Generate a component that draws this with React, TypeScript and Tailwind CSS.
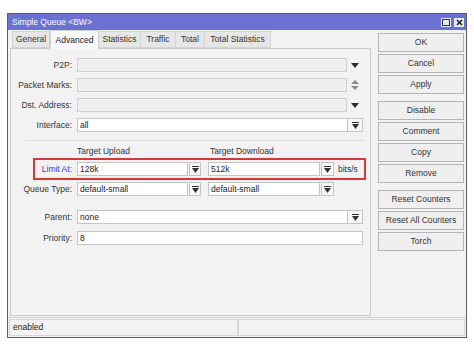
const tabs = [
  { label: 'General', w: 'w-[38px]' },
  { label: 'Advanced', w: 'w-[49px]', active: true },
  { label: 'Statistics', w: 'w-[42px]' },
  { label: 'Traffic', w: 'w-[35px]' },
  { label: 'Total', w: 'w-[29px]' },
  { label: 'Total Statistics', w: 'w-[66px]' },
];

const buttonGroups = [
  ['OK', 'Cancel', 'Apply'],
  ['Disable', 'Comment', 'Copy', 'Remove'],
  ['Reset Counters', 'Reset All Counters', 'Torch'],
];

function Arrow() {
  return (
    <svg width="8" height="5" viewBox="0 0 8 5">
      <path d="M0 0h8L4 5z" fill="#2a2a2a" />
    </svg>
  );
}

function UpDown() {
  return (
    <svg width="8" height="10" viewBox="0 0 8 10">
      <path d="M0 4h8L4 0z" fill="#8a8a8a" />
      <path d="M0 6h8L4 10z" fill="#8a8a8a" />
    </svg>
  );
}

function BarArrow() {
  return (
    <svg width="7" height="7" viewBox="0 0 7 7">
      <path d="M0 0.5h7" stroke="#333" strokeWidth="1" />
      <path d="M0 2h7L3.5 7z" fill="#333" />
    </svg>
  );
}

function DropBtn({ w }: { w: string }) {
  return (
    <div className={`${w} h-[14px] border border-[#c4c4c4] bg-[#f7f7f7] flex items-center justify-center`}>
      <BarArrow />
    </div>
  );
}

function Box({ value, w }: { value: string; w: string }) {
  return (
    <div className={`${w} h-[14px] border border-[#c4c4c4] bg-white pl-[2px] leading-[12px] text-[#222]`}>{value}</div>
  );
}

function Label({ text, w = 'w-[66px]', blue }: { text: string; w?: string; blue?: boolean }) {
  return (
    <div className={`${w} shrink-0 text-right pr-[5px] ${blue ? 'text-[#3b3bd6]' : 'text-[#333]'}`}>{text}</div>
  );
}

function DisabledRow({ label, icon }: { label: string; icon: 'down' | 'updown' }) {
  return (
    <div className="flex items-center h-[14px]">
      <Label text={label} />
      <div className="w-[270px] h-[14px] border border-[#cdcdcd] bg-[#efefef]" />
      <div className="w-[16px] flex justify-center">{icon === 'down' ? <Arrow /> : <UpDown />}</div>
    </div>
  );
}

function WideRow({ label, value, withBtn }: { label: string; value: string; withBtn?: boolean }) {
  return (
    <div className="flex items-center h-[14px]">
      <Label text={label} />
      <div className="w-[286px] h-[14px] border border-[#c4c4c4] bg-white flex">
        <div className="flex-1 pl-[2px] leading-[12px] text-[#222]">{value}</div>
        {withBtn && (
          <div className="w-[15px] border-l border-[#c4c4c4] bg-[#f7f7f7] flex items-center justify-center">
            <BarArrow />
          </div>
        )}
      </div>
    </div>
  );
}

function PairFields({ a, b }: { a: string; b: string }) {
  return (
    <>
      <Box value={a} w="w-[111px]" />
      <div className="ml-[1px]"><DropBtn w="w-[12px]" /></div>
      <div className="ml-[7px]"><Box value={b} w="w-[112px]" /></div>
      <div className="ml-[1px]"><DropBtn w="w-[13px]" /></div>
    </>
  );
}

export default function App() {
  return (
    <div className="w-[474px] h-[351px] bg-white pt-[13px] pl-[7px] font-['Liberation_Sans',Arial,sans-serif] text-[8.5px] text-[#333]">
      <div className="w-[460px] h-[325px] border border-[#5e5e5e] bg-[#f2f2f2] flex flex-col">
        {/* title bar */}
        <div className="h-[16px] bg-[#6b70d3] flex items-center justify-between pl-[4px] pr-[2px]">
          <span className="text-white text-[8.5px]">Simple Queue &lt;BW&gt;</span>
          <div className="flex gap-[3px]">
            <div className="w-[10px] h-[9px] bg-[#e6e6ee] flex items-center justify-center">
              <svg width="8" height="7" viewBox="0 0 8 7">
                <rect x="0.5" y="0.5" width="7" height="6" fill="none" stroke="#333" />
              </svg>
            </div>
            <div className="w-[10px] h-[9px] bg-[#e6e6ee] flex items-center justify-center">
              <svg width="7" height="7" viewBox="0 0 7 7">
                <path d="M1 1l5 5M6 1L1 6" stroke="#222" strokeWidth="1.6" />
              </svg>
            </div>
          </div>
        </div>

        {/* body */}
        <div className="flex-1 flex">
          <div className="w-[363px] pl-[2px] flex flex-col">
            <div className="h-[18px] flex items-end pl-[2px]">
              {tabs.map((t) =>
                t.active ? (
                  <div
                    key={t.label}
                    className={`${t.w} h-[19px] -mb-[1px] z-10 bg-[#f8f8f8] border border-b-0 border-[#cfcfcf] flex items-center justify-center text-[#222]`}
                  >
                    {t.label}
                  </div>
                ) : (
                  <div
                    key={t.label}
                    className={`${t.w} h-[17px] bg-[#e6e6e6] border border-[#d4d4d4] border-l-0 first:border-l flex items-center justify-center`}
                  >
                    {t.label}
                  </div>
                )
              )}
            </div>
            <div className="flex-1 border border-[#cbcbcb] bg-[#f2f2f2] flex flex-col pt-[9px] mb-[1px]">
              <div className="flex flex-col gap-[6px]">
                <DisabledRow label="P2P:" icon="down" />
                <DisabledRow label="Packet Marks:" icon="updown" />
                <DisabledRow label="Dst. Address:" icon="down" />
                <WideRow label="Interface:" value="all" withBtn />
              </div>
              <div className="mt-[8px] ml-[14px] w-[339px] h-px bg-[#dcdcdc]" />
              <div className="mt-[5px] h-[11px] flex items-center">
                <div className="ml-[66px] w-[133px]">Target Upload</div>
                <div>Target Download</div>
              </div>
              <div className="mt-[1px] ml-[22px] w-[333px] h-[22px] border-2 border-[#d23a3a] flex items-center">
                <Label text="Limit At:" w="w-[42px]" blue />
                <PairFields a="128k" b="512k" />
                <span className="ml-[4px] text-[#333]">bits/s</span>
              </div>
              <div className="mt-[2px] flex items-center h-[14px]">
                <Label text="Queue Type:" />
                <PairFields a="default-small" b="default-small" />
              </div>
              <div className="mt-[14px] flex flex-col gap-[7px]">
                <WideRow label="Parent:" value="none" withBtn />
                <WideRow label="Priority:" value="8" />
              </div>
            </div>
          </div>

          {/* buttons */}
          <div className="flex-1 pl-[7px] pt-[3px] flex flex-col gap-[7px]">
            {buttonGroups.map((g, i) => (
              <div key={i} className="flex flex-col gap-[2px]">
                {g.map((b) => (
                  <div
                    key={b}
                    className="w-[86px] h-[19px] border border-[#b4b4b4] bg-[#efefef] flex items-center justify-center text-[#333]"
                  >
                    {b}
                  </div>
                ))}
              </div>
            ))}
          </div>
        </div>

        {/* status bar */}
        <div className="h-[20px] border-t border-[#cfcfcf] flex px-[1px] pb-[1px] pt-[1px]">
          <div className="w-[229px] border border-[#d6d6d6] flex items-center pl-[3px] text-[#222]">enabled</div>
          <div className="flex-1 border border-[#d6d6d6]" />
        </div>
      </div>
    </div>
  );
}
